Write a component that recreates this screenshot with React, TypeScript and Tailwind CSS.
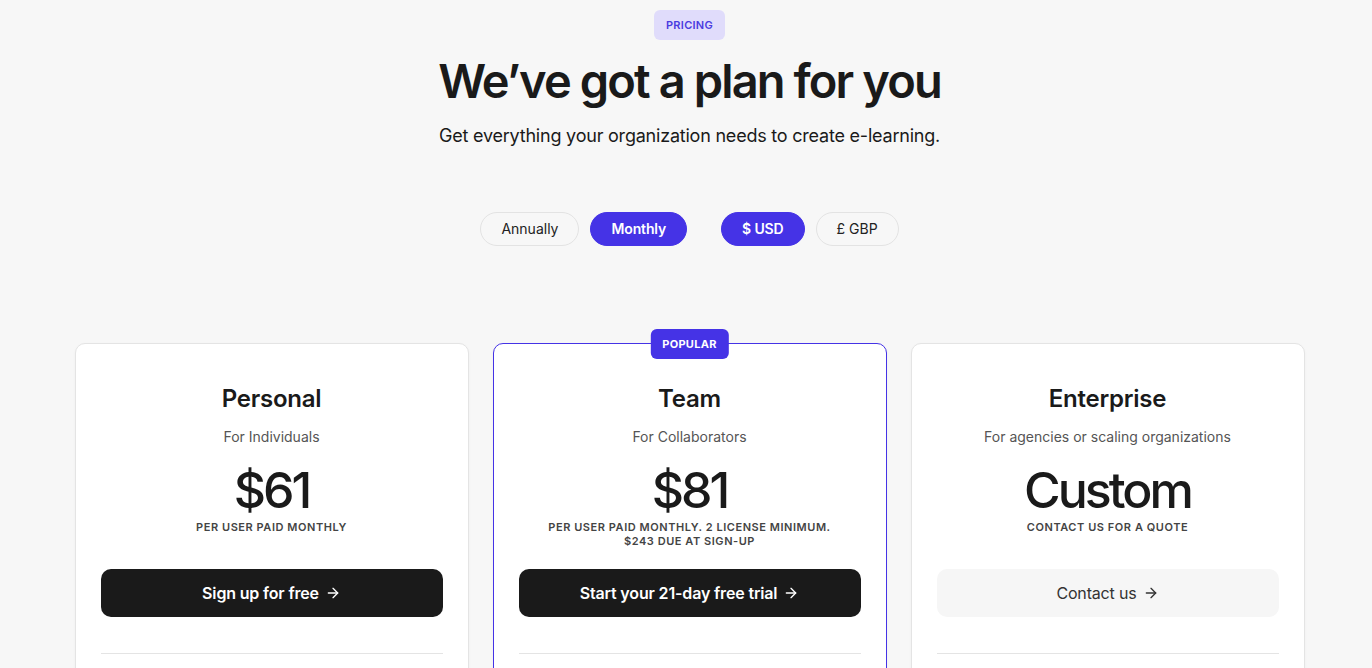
import { ArrowRight } from 'lucide-react';

const plans = [
  {
    name: 'Personal',
    audience: 'For Individuals',
    price: '$61',
    note: ['PER USER PAID MONTHLY'],
    cta: 'Sign up for free',
    dark: true,
    popular: false,
  },
  {
    name: 'Team',
    audience: 'For Collaborators',
    price: '$81',
    note: ['PER USER PAID MONTHLY. 2 LICENSE MINIMUM.', '$243 DUE AT SIGN-UP'],
    cta: 'Start your 21-day free trial',
    dark: true,
    popular: true,
  },
  {
    name: 'Enterprise',
    audience: 'For agencies or scaling organizations',
    price: 'Custom',
    note: ['CONTACT US FOR A QUOTE'],
    cta: 'Contact us',
    dark: false,
    popular: false,
  },
];

function Pill({ label, active }: { label: string; active?: boolean }) {
  return (
    <button
      className={
        active
          ? 'h-[34px] px-5 rounded-full bg-[#4533e6] text-white text-sm font-semibold tracking-[-0.01em] border border-[#4533e6]'
          : 'h-[34px] px-5 rounded-full bg-[#f7f7f7] text-[#222] text-sm border border-[#e3e3e3]'
      }
    >
      {label}
    </button>
  );
}

export default function App() {
  return (
    <div
      className="min-h-screen bg-[#f7f7f7] pl-[7px] text-[#1a1a1a]"
      style={{ fontFamily: 'Inter, "Noto Sans", sans-serif' }}
    >
      {/* Header */}
      <div className="flex flex-col items-center pt-[10px]">
        <span className="h-[30px] px-3 flex items-center rounded-md bg-[#e0dcfb] text-[#4a3be0] text-[11px] font-semibold tracking-wide">
          PRICING
        </span>
        <h1 className="mt-[13px] text-[47px] leading-[56px] font-semibold tracking-[-0.04em]">
          We’ve got a plan for you
        </h1>
        <p className="mt-[15px] text-[18px] leading-6 tracking-[-0.012em]">
          Get everything your organization needs to create e-learning.
        </p>

        {/* Toggles */}
        <div className="mt-[64px] flex items-center gap-[34px]">
          <div className="flex gap-[11px]">
            <Pill label="Annually" />
            <Pill label="Monthly" active />
          </div>
          <div className="flex gap-[11px]">
            <Pill label="$ USD" active />
            <Pill label="£ GBP" />
          </div>
        </div>
      </div>

      {/* Cards */}
      <div className="mt-[97px] flex justify-center gap-[24px]">
        {plans.map((p) => (
          <div
            key={p.name}
            className={
              'relative w-[394px] h-[400px] rounded-[10px] bg-white px-[25px] pt-[40px] shadow-[0_1px_3px_rgba(0,0,0,0.04)] border ' +
              (p.popular ? 'border-[#4533e6]' : 'border-[#e4e4e4]')
            }
          >
            {p.popular && (
              <span className="absolute left-1/2 -translate-x-1/2 -top-[15px] h-[30px] px-3 flex items-center rounded-md bg-[#4533e6] text-white text-[11px] font-bold tracking-wide">
                POPULAR
              </span>
            )}
            <div className="flex flex-col items-center text-center">
              <h2 className="text-[24px] leading-[30px] font-semibold tracking-[-0.01em]">{p.name}</h2>
              <p className="mt-[13px] text-sm text-[#555]">{p.audience}</p>
              <div className="mt-[13px] text-[50px] leading-[60px] font-medium tracking-[-0.06em]">
                {p.price}
              </div>
              <div className="h-[38px] flex flex-col text-[11px] leading-[14px] font-semibold tracking-[0.05em] text-[#444]">
                {p.note.map((n) => (
                  <span key={n}>{n}</span>
                ))}
              </div>
            </div>
            <button
              className={
                'mt-[11px] w-full h-[48px] rounded-[10px] flex items-center justify-center gap-1.5 text-base tracking-[-0.01em] ' +
                (p.dark ? 'bg-[#1a1a1a] text-white font-semibold' : 'bg-[#f6f6f6] text-[#333] font-normal')
              }
            >
              {p.cta}
              <ArrowRight className="w-4 h-4" strokeWidth={2} />
            </button>
            <div className="mt-[36px] h-px bg-[#e4e4e4]" />
          </div>
        ))}
      </div>
    </div>
  );
}
